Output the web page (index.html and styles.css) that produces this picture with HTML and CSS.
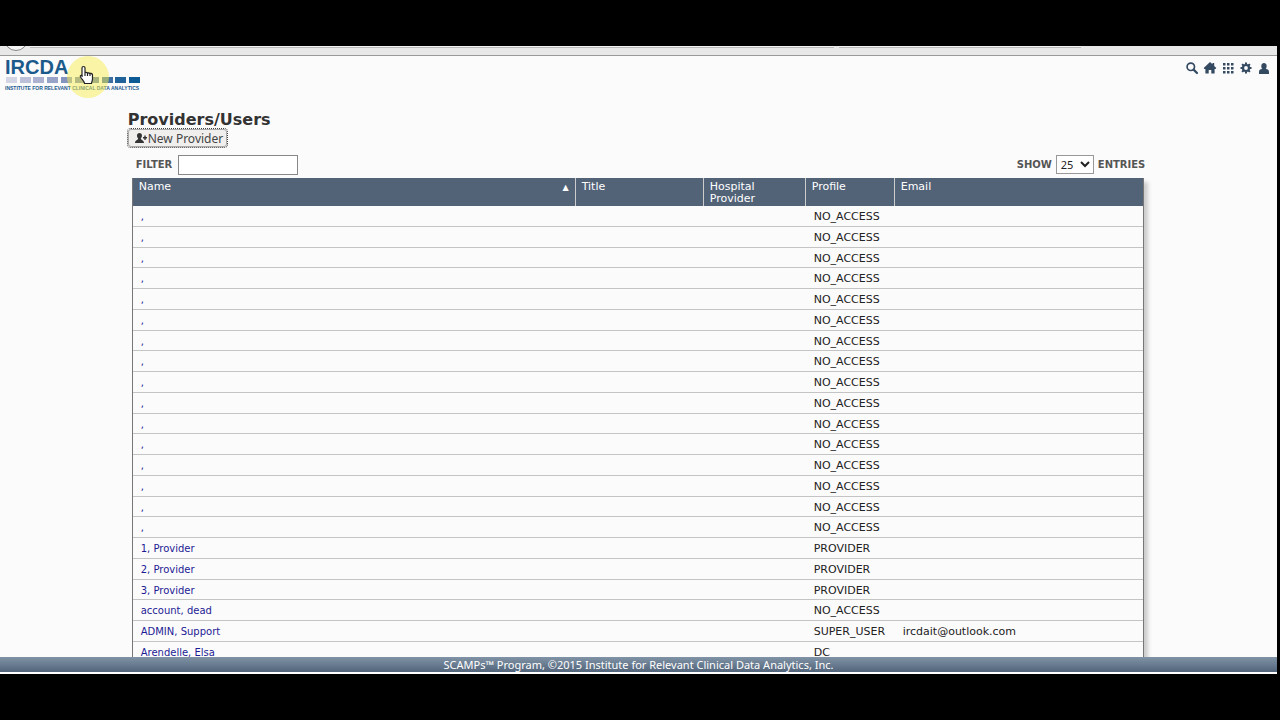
FILE: index.html
```html
<!DOCTYPE html>
<html lang="en">
<head>
  <meta charset="UTF-8">
  <title>Providers/Users</title>
  <link rel="stylesheet" href="styles.css">
</head>
<body>

<div class="screen">
  <div class="browser-bar">
    <span class="back"></span>
    <span class="address"></span>
    <span class="search"></span>
  </div>

  <header>
    <a class="logo" href="#">
      <span class="logo-name">IRCDA</span>
      <svg class="logo-squares" viewBox="0 0 134 7" width="134" height="7">
        <rect x="0" width="11" height="6" fill="#d4d5e4"/>
        <rect x="14" width="11" height="6" fill="#bcc0d8"/>
        <rect x="27" width="11" height="6" fill="#acb2d0"/>
        <rect x="41" width="11" height="6" fill="#98a3c8"/>
        <rect x="55" width="11" height="6" fill="#8494be"/>
        <rect x="69" width="11" height="6" fill="#7589b0"/>
        <rect x="82" width="11" height="6" fill="#5c7ba8"/>
        <rect x="96" width="11" height="6" fill="#3f6fa2"/>
        <rect x="109" width="11" height="6" fill="#20629a"/>
        <rect x="123" width="11" height="6" fill="#0d5a94"/>
      </svg>
      <span class="logo-tag">INSTITUTE FOR RELEVANT CLINICAL DATA ANALYTICS</span>
    </a>
    <div class="pointer">
      <svg viewBox="0 0 16 20" width="16" height="20">
        <path d="M4.500 1.500c1 0 1.500.7 1.500 1.500v5c0-1 2.500-1 2.500.4 0-1 2.500-.8 2.500.5 0-.9 2.500-.8 2.500.8v4.300c0 2-1 2.700-1 4.500h-7c0-2-1.500-3-4-6.500-.8-1.300.6-2.200 1.700-1.200L3 12V3c0-.8.5-1.500 1.500-1.500zM6 8v3M8.500 8.500V11M11 9v2" fill="#fff" stroke="#222" stroke-width="1.200"/>
      </svg>
    </div>
    <nav>
      <a href="#" aria-label="Search"><svg viewBox="0 0 12 12"><circle cx="4.800" cy="4.800" r="3.700" fill="none" stroke="#344a61" stroke-width="1.700"/><path d="M7.600 7.600l3.400 3.400" stroke="#344a61" stroke-width="2.200" stroke-linecap="round"/></svg></a>
      <a href="#" aria-label="Home"><svg viewBox="0 0 12 12"><path d="M6 0l2.500 2.300V1h1.700v2.900L12.300 6l-.7 1h-1V11.500H7.300V8H4.700v3.500H1.400V7h-1L-.3 6z" fill="#344a61"/></svg></a>
      <a href="#" aria-label="Modules"><svg viewBox="0 0 12 12"><path d="M1 1h2.500v2.500H1zM5 1h2.500v2.500H5zM9 1h2.500v2.500H9zM1 5h2.500v2.500H1zM5 5h2.500v2.500H5zM9 5h2.500v2.500H9zM1 9h2.500v2.500H1zM5 9h2.500v2.500H5zM9 9h2.500v2.500H9z" fill="#344a61"/></svg></a>
      <a href="#" aria-label="Settings"><svg viewBox="0 0 12 12"><circle cx="6" cy="6" r="3" fill="none" stroke="#344a61" stroke-width="2.200"/><path d="M6 .5v2M6 9.500v2M.5 6h2M9.500 6h2M2.100 2.100l1.400 1.400M8.500 8.500l1.400 1.400M2.100 9.900l1.400-1.400M8.500 3.500l1.400-1.400" stroke="#344a61" stroke-width="2"/></svg></a>
      <a href="#" aria-label="Account"><svg viewBox="0 0 12 12"><path d="M6 1C9 1 9.300 5 7.800 7 10 7 11 8 11 10v1.500q0 .5-.5.5h-9q-.5 0-.5-.5V10C1 8 2 7 4.200 7 2.700 5 3 1 6 1z" fill="#344a61"/></svg></a>
    </nav>
  </header>

  <main>
    <h1>Providers/Users</h1>
    <button class="new-provider">
      <svg viewBox="0 0 12 12" width="12" height="12"><path d="M4.500 1c3.200 0 2.900 4 1.300 5.500 0 1.500 3.200 1.500 3.200 4.500H0c0-3 3.200-3 3.200-4.500C1.600 5 1.300 1 4.500 1zM8 5h1.300V3.500h1.400V5H12v1.400h-1.300V8H9.300V6.400H8z" fill="#333"/></svg>
      New Provider
    </button>

    <div class="controls">
      <label>FILTER <input type="text" id="filter"></label>
      <label>SHOW
        <select id="page-size">
          <option>10</option>
          <option selected>25</option>
          <option>50</option>
        </select>
        ENTRIES</label>
    </div>

    <table>
      <colgroup>
        <col class="col-name"><col class="col-title"><col class="col-hospital"><col class="col-profile"><col>
      </colgroup>
      <thead>
        <tr><th><div class="sorted">Name <span>▲</span></div></th><th>Title</th><th>Hospital Provider</th><th>Profile</th><th>Email</th></tr>
      </thead>
      <tbody id="providers"></tbody>
    </table>
  </main>

  <footer>SCAMPs™ Program, ©2015 Institute for Relevant Clinical Data Analytics, Inc.</footer>
</div>

<script>
  const providers = [];
  for (let i = 0; i < 16; i++) {
    providers.push({ name: ",", profile: "NO_ACCESS", email: "" });
  }
  providers.push(
    { name: "1, Provider", profile: "PROVIDER", email: "" },
    { name: "2, Provider", profile: "PROVIDER", email: "" },
    { name: "3, Provider", profile: "PROVIDER", email: "" },
    { name: "account, dead", profile: "NO_ACCESS", email: "" },
    { name: "ADMIN, Support", profile: "SUPER_USER", email: "ircdait@outlook.com" },
    { name: "Arendelle, Elsa", profile: "DC", email: "" }
  );

  const list = document.getElementById('providers');
  providers.forEach(p => {
    const row = list.insertRow();
    const link = document.createElement('a');
    link.href = "#";
    link.textContent = p.name;
    row.insertCell().appendChild(link);
    ["", "", p.profile, p.email].forEach(text => {
      row.insertCell().textContent = text;
    });
  });
</script>

</body>
</html>
```
FILE: styles.css
```css
* { box-sizing: border-box; }
body { margin: 0; height: 100vh; padding: 46px 3px 46px 0; background: #000; font-family: Verdana, "DejaVu Sans", sans-serif; font-size: 11px; color: #222; }
a { text-decoration: none; }

.screen { height: 100%; display: flex; flex-direction: column; overflow: hidden; background: #fcfbfc; border-bottom: 2px solid #fff; }

.browser-bar { flex: none; position: relative; display: flex; gap: 5px; height: 10px; padding-left: 30px; background: #e8e8e8; border-bottom: 1px solid #999; overflow: hidden; }
.browser-bar .address, .browser-bar .search { height: 2px; border-bottom: 1px solid #bbb; background: #f4f4f4; }
.browser-bar .address { flex: 804; }
.browser-bar .search { flex: 242; margin-right: 196px; }
.browser-bar .back { position: absolute; left: 4px; top: -19px; width: 24px; height: 24px; border: 1px solid #888; border-radius: 50%; background: #f6f6f6; }

header { flex: none; position: relative; display: flex; justify-content: space-between; height: 54px; padding: 2px 7px 0 5px; }
.logo { display: flex; flex-direction: column; font-family: "Liberation Sans", Arial, sans-serif; font-weight: bold; color: #1d5a8c; }
.logo-name { font-size: 20px; line-height: 19px; }
.logo-squares { margin-left: 1px; }
.logo-tag { font-size: 5px; line-height: 8px; white-space: nowrap; }
.pointer { position: absolute; left: 67px; top: 0; width: 42px; height: 42px; padding: 0 2px 4px 0; border-radius: 50%; background: rgba(245, 238, 80, 0.5); display: flex; align-items: center; justify-content: center; }
nav { display: flex; gap: 6px; padding-top: 4px; }
nav svg { display: block; width: 12px; height: 12px; overflow: visible; }

main { flex: 1; min-height: 0; overflow: hidden; padding: 0 10%; }
h1 { margin: 0; font-size: 16px; line-height: 19px; color: #333; }
.new-provider { display: flex; align-items: center; gap: 1px; height: 18px; padding: 0 3px 0 6px; font: 12px "Noto Sans", sans-serif; color: #444; background: #f0efee; border: 1px solid #aaa; border-radius: 3px; outline: 1px dotted #444; }
.controls { display: flex; justify-content: space-between; align-items: center; height: 31px; padding: 4px 4px 0 8px; font-size: 10px; font-weight: bold; color: #555; }
.controls label { display: flex; align-items: center; gap: 4px; }
.controls input { width: 120px; height: 20px; margin-left: 2px; border: 1px solid #888; background: #fff; }
.controls select { width: 38px; height: 19px; padding: 0; font: 11px "Noto Sans", sans-serif; border: 1px solid #999; background: #fff; color: #222; }

table { width: calc(100% - 9px); margin-left: 4px; table-layout: fixed; border-collapse: separate; border-spacing: 0; border: 1px solid #777; border-top: 0; box-shadow: 4px 4px 4px #ccc; }
.col-name { width: 443px; }
.col-title { width: 128px; }
.col-hospital { width: 102px; }
.col-profile { width: 89px; }
th { height: 28px; padding: 3px 6px 1px; font-size: 11px; font-weight: normal; line-height: 12px; text-align: left; vertical-align: top; color: #fff; background: #526378; border-right: 1px solid #ccc; }
th:last-child { border-right: 0; }
.sorted { display: flex; justify-content: space-between; }
.sorted span { font-size: 8px; padding-top: 1px; }
td { padding: 4px 8px 2px; line-height: 1.25; white-space: nowrap; border-bottom: 1px solid #c4c4c4; }
td a { font-size: 10px; color: #1c1c94; }

footer { flex: none; height: 15px; font-family: "Noto Sans", sans-serif; font-size: 11px; line-height: 16px; text-align: center; color: #fff; background: linear-gradient(#8093a6, #52647a); }
```
